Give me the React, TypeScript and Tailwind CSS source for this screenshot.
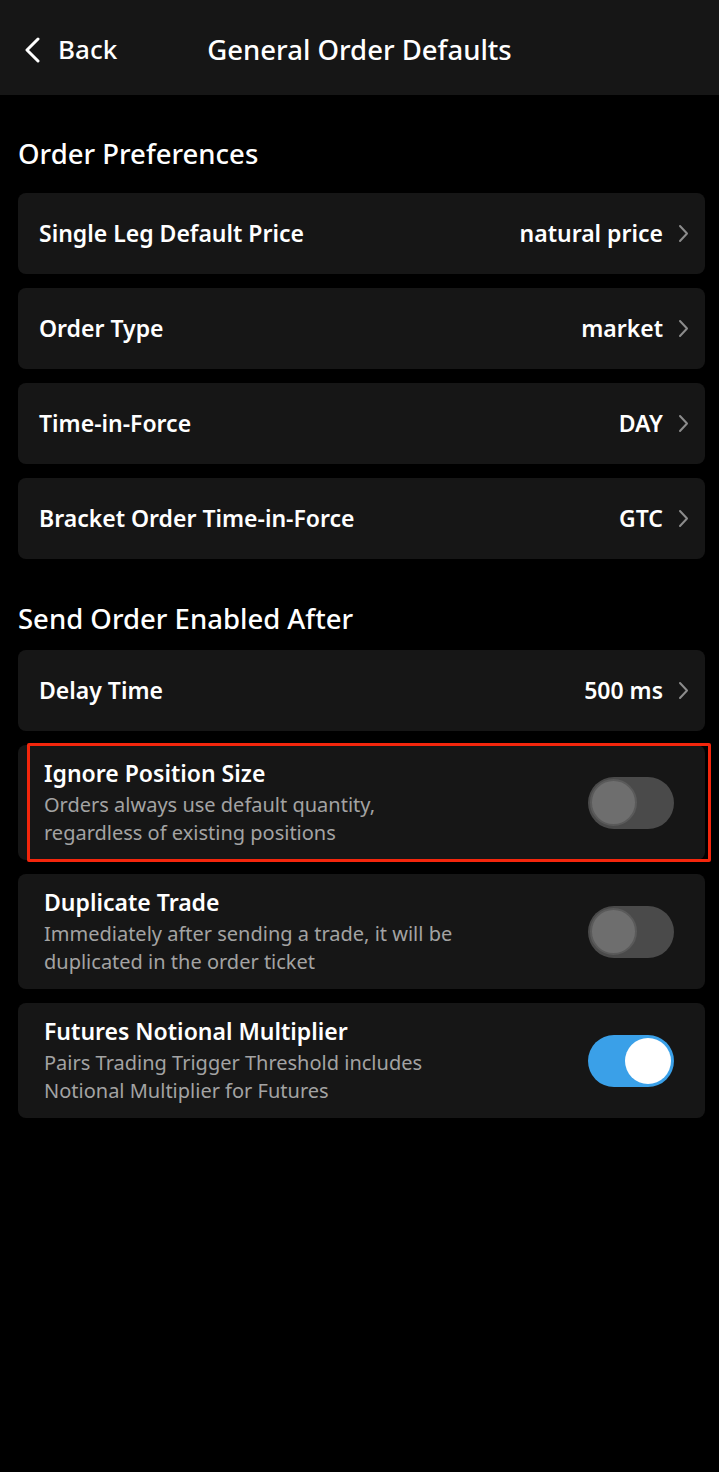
import { useState } from "react";

type Row = { label: string; value: string };

const orderRows: Row[] = [
  { label: "Single Leg Default Price", value: "natural price" },
  { label: "Order Type", value: "market" },
  { label: "Time-in-Force", value: "DAY" },
  { label: "Bracket Order Time-in-Force", value: "GTC" },
];

function Chevron() {
  return (
    <svg width="11" height="19" viewBox="0 0 11 19" fill="none" className="shrink-0">
      <path d="M2 2l7 7.5L2 17" stroke="#8c8c8c" strokeWidth="2" strokeLinecap="round" strokeLinejoin="round" />
    </svg>
  );
}

function ValueRow({ label, value }: Row) {
  return (
    <div className="h-[81px] rounded-[8px] bg-[#161616] flex items-center pl-[21px] pr-[16px]">
      <span className="flex-1 text-[23px] font-semibold text-white">{label}</span>
      <span className="text-[23px] font-semibold text-white mr-[15px]">{value}</span>
      <Chevron />
    </div>
  );
}

function Toggle({ on, onClick }: { on: boolean; onClick: () => void }) {
  return (
    <button
      onClick={onClick}
      className={
        on
          ? "w-[86px] h-[52px] rounded-full bg-[#3aa0e8] flex items-center justify-end px-[3px] shrink-0"
          : "w-[86px] h-[52px] rounded-full bg-[#4a4a4a] flex items-center justify-start px-[2px] shrink-0"
      }
    >
      <span
        className={
          on
            ? "w-[46px] h-[46px] rounded-full bg-white"
            : "w-[47px] h-[47px] rounded-full bg-[#6e6e6e] border-2 border-[#5a5a5a]"
        }
      />
    </button>
  );
}

function ToggleRow({
  title,
  desc,
  on,
  onClick,
  marked,
}: {
  title: string;
  desc: string[];
  on: boolean;
  onClick: () => void;
  marked?: boolean;
}) {
  return (
    <div className="relative h-[115px] rounded-[8px] bg-[#161616] flex items-center pl-[26px] pr-[31px]">
      <div className="flex-1">
        <div className="text-[23px] leading-[30px] font-semibold text-white">{title}</div>
        <div className="mt-[3px] text-[20px] leading-[28px] text-[#a3a3a3]">
          {desc.map((d) => (
            <div key={d}>{d}</div>
          ))}
        </div>
      </div>
      <Toggle on={on} onClick={onClick} />
      {marked && (
        <div className="absolute left-[9px] -right-[6px] -top-[2px] -bottom-[2px] border-[3px] border-[#f4260c] rounded-[2px] pointer-events-none" />
      )}
    </div>
  );
}

export default function App() {
  const [ignore, setIgnore] = useState(false);
  const [dup, setDup] = useState(false);
  const [futures, setFutures] = useState(true);

  return (
    <div className="min-h-[1472px] bg-black text-white" style={{ fontFamily: '"Noto Sans", "Open Sans", sans-serif' }}>
      <div className="h-[95px] pt-[4px] bg-[#161616] grid grid-cols-[1fr_auto_1fr] items-center">
        <div className="flex items-center pl-[24px]">
          <svg width="17" height="26" viewBox="0 0 17 26" fill="none">
            <path d="M14 2L3 13l11 11" stroke="white" strokeWidth="3" strokeLinecap="round" strokeLinejoin="round" />
          </svg>
          <span className="ml-[17px] text-[26px] font-medium">Back</span>
        </div>
        <div className="text-[27.5px] font-medium">General Order Defaults</div>
        <div />
      </div>

      <div className="pl-[18px] pr-[14px]">
        <h2 className="pt-[40px] mb-[20px] text-[27.5px] leading-[38px] font-medium">Order Preferences</h2>
        <div className="flex flex-col gap-[14px]">
          {orderRows.map((r) => (
            <ValueRow key={r.label} label={r.label} value={r.value} />
          ))}
        </div>

        <h2 className="mt-[41px] mb-[12px] text-[27.5px] leading-[38px] font-medium">Send Order Enabled After</h2>
        <div className="flex flex-col gap-[14px]">
          <ValueRow label="Delay Time" value="500 ms" />
          <ToggleRow
            title="Ignore Position Size"
            desc={["Orders always use default quantity,", "regardless of existing positions"]}
            on={ignore}
            onClick={() => setIgnore(!ignore)}
            marked
          />
          <ToggleRow
            title="Duplicate Trade"
            desc={["Immediately after sending a trade, it will be", "duplicated in the order ticket"]}
            on={dup}
            onClick={() => setDup(!dup)}
          />
          <ToggleRow
            title="Futures Notional Multiplier"
            desc={["Pairs Trading Trigger Threshold includes", "Notional Multiplier for Futures"]}
            on={futures}
            onClick={() => setFutures(!futures)}
          />
        </div>
      </div>
    </div>
  );
}
